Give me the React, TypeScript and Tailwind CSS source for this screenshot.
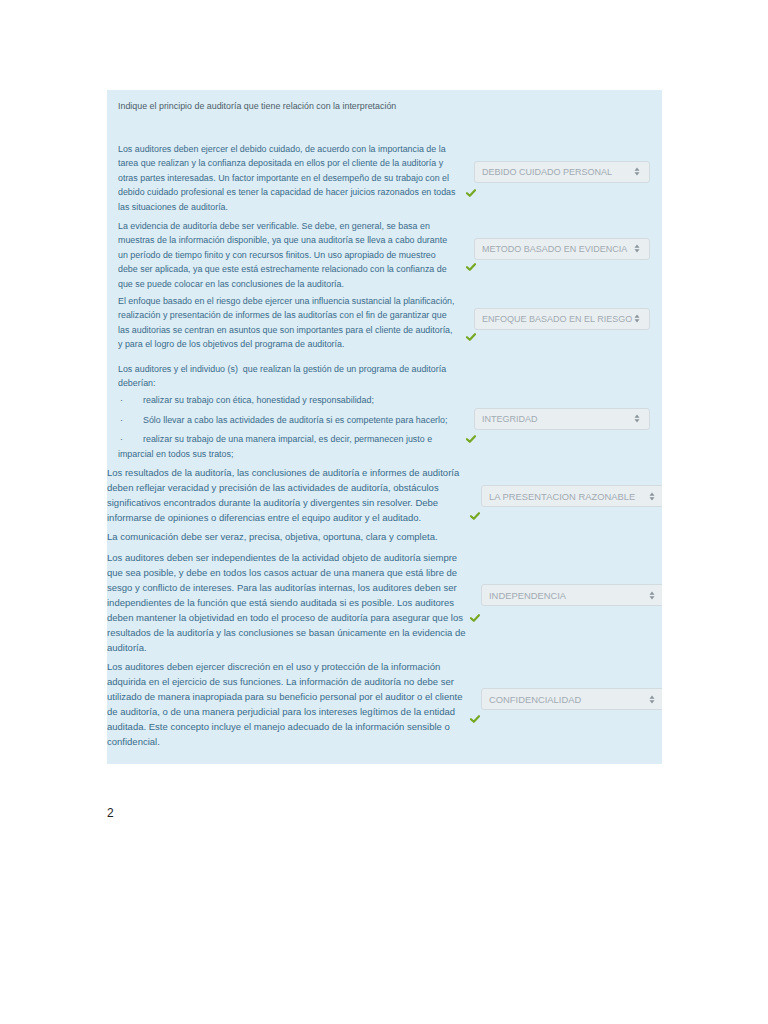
import React from 'react';

const FONT = { fontFamily: '"Liberation Sans", Arial, sans-serif' };

function Check() {
  return (
    <svg width="10" height="8" viewBox="0 0 10 8" className="block">
      <path d="M1 4.2 L3.8 6.8 L9 1.2" fill="none" stroke="#76a824" strokeWidth="2.2" strokeLinecap="round" strokeLinejoin="round" />
    </svg>
  );
}

function Arrows() {
  return (
    <svg width="6" height="9" viewBox="0 0 6 9" className="block">
      <path d="M3 0.5 L5.5 3.7 L0.5 3.7 Z" fill="#8a949b" />
      <path d="M3 8.5 L5.5 5.3 L0.5 5.3 Z" fill="#8a949b" />
    </svg>
  );
}

function Select({ label, wide }: { label: string; wide?: boolean }) {
  return (
    <div
      className={`flex items-center justify-between h-[22px] shrink-0 bg-[#e9eef1] border border-[#d3dbe0] rounded-[3px] pl-[7px] pr-[9px] ${
        wide ? 'w-[184px]' : 'w-[176px]'
      }`}
    >
      <span className={`text-[#a1abb2] uppercase whitespace-nowrap ${wide ? 'text-[9.4px]' : 'text-[9px]'}`}>
        {label}
      </span>
      <Arrows />
    </div>
  );
}

function Lines({ lines }: { lines: string[] }) {
  return (
    <>
      {lines.map((l) => (
        <span key={l} className="block whitespace-nowrap">
          {l}
        </span>
      ))}
    </>
  );
}

interface RowProps {
  children: React.ReactNode;
  label: string;
  checkTop: number;
  selectTop: number;
  className?: string;
}

// filas con margen interior (texto en x=118)
function RowA({ children, label, checkTop, selectTop, className }: RowProps) {
  return (
    <div className={`flex items-start pl-[11px] text-[8.9px] leading-[14.5px] ${className ?? ''}`}>
      <div className="w-[345px] shrink-0">{children}</div>
      <div className="ml-[3px] w-[8px] shrink-0" style={{ marginTop: checkTop }}>
        <Check />
      </div>
      <div className="shrink-0" style={{ marginTop: selectTop }}>
        <Select label={label} />
      </div>
    </div>
  );
}

// filas sin margen (texto en x=107)
function RowB({ children, label, checkTop, selectTop, className }: RowProps) {
  return (
    <div className={`flex items-start text-[9.5px] leading-[15px] ${className ?? ''}`}>
      <div className="w-[358px] shrink-0">{children}</div>
      <div className="ml-[5px] w-[10px] shrink-0" style={{ marginTop: checkTop }}>
        <Check />
      </div>
      <div className="ml-[1px] shrink-0" style={{ marginTop: selectTop }}>
        <Select label={label} wide />
      </div>
    </div>
  );
}

function Bullet({ text, className }: { text: string; className?: string }) {
  return (
    <span className={`block whitespace-nowrap ${className ?? ''}`}>
      <span className="inline-block w-[25px] pl-[2px]">·</span>
      {text}
    </span>
  );
}

export default function App() {
  return (
    <div className="min-h-screen bg-white" style={FONT}>
      <div className="pt-[90px] pl-[107px]">
        <div className="w-[555px] bg-[#dcedf6] overflow-hidden pt-[8.75px] pb-[15.5px] text-[#3a6b89]">
          <p className="pl-[11px] text-[8.9px] leading-[14.5px] text-[#4d5d68]">
            Indique el principio de auditoría que tiene relación con la interpretación
          </p>

          <RowA className="mt-[28.5px]" label="Debido cuidado personal" checkTop={47} selectTop={19}>
            <Lines
              lines={[
                'Los auditores deben ejercer el debido cuidado, de acuerdo con la importancia de la',
                'tarea que realizan y la confianza depositada en ellos por el cliente de la auditoría y',
                'otras partes interesadas. Un factor importante en el desempeño de su trabajo con el',
                'debido cuidado profesional es tener la capacidad de hacer juicios razonados en todas',
                'las situaciones de auditoría.',
              ]}
            />
          </RowA>

          <RowA className="mt-[4.5px]" label="Metodo basado en evidencia" checkTop={44.5} selectTop={19}>
            <Lines
              lines={[
                'La evidencia de auditoría debe ser verificable. Se debe, en general, se basa en',
                'muestras de la información disponible, ya que una auditoría se lleva a cabo durante',
                'un período de tiempo finito y con recursos finitos. Un uso apropiado de muestreo',
                'debe ser aplicada, ya que este está estrechamente relacionado con la confianza de',
                'que se puede colocar en las conclusiones de la auditoría.',
              ]}
            />
          </RowA>

          <RowA className="mt-[2.5px]" label="Enfoque basado en el riesgo" checkTop={39.5} selectTop={14}>
            <Lines
              lines={[
                'El enfoque basado en el riesgo debe ejercer una influencia sustancial la planificación,',
                'realización y presentación de informes de las auditorías con el fin de garantizar que',
                'las auditorias se centran en asuntos que son importantes para el cliente de auditoría,',
                'y para el logro de los objetivos del programa de auditoría.',
              ]}
            />
          </RowA>

          <RowA className="mt-[10px]" label="Integridad" checkTop={73.5} selectTop={46}>
            <span className="block whitespace-pre">
              Los auditores y el individuo (s)  que realizan la gestión de un programa de auditoría
            </span>
            <span className="block">deberían:</span>
            <Bullet className="mt-[2.5px]" text="realizar su trabajo con ética, honestidad y responsabilidad;" />
            <Bullet
              className="mt-[5.5px]"
              text="Sólo llevar a cabo las actividades de auditoría si es competente para hacerlo;"
            />
            <Bullet
              className="mt-[4.5px]"
              text="realizar su trabajo de una manera imparcial, es decir, permanecen justo e"
            />
            <span className="block">imparcial en todos sus tratos;</span>
          </RowA>

          <RowB className="mt-[3.5px]" label="La presentacion razonable" checkTop={47} selectTop={20.5}>
            <Lines
              lines={[
                'Los resultados de la auditoría, las conclusiones de auditoría e informes de auditoría',
                'deben reflejar veracidad y precisión de las actividades de auditoría, obstáculos',
                'significativos encontrados durante la auditoría y divergentes sin resolver. Debe',
                'informarse de opiniones o diferencias entre el equipo auditor y el auditado.',
              ]}
            />
          </RowB>

          <p className="mt-[4px] text-[9.5px] leading-[15px]">
            La comunicación debe ser veraz, precisa, objetiva, oportuna, clara y completa.
          </p>

          <RowB className="mt-[6px]" label="Independencia" checkTop={64} selectTop={34.5}>
            <Lines
              lines={[
                'Los auditores deben ser independientes de la actividad objeto de auditoría siempre',
                'que sea posible, y debe en todos los casos actuar de una manera que está libre de',
                'sesgo y conflicto de intereses. Para las auditorías internas, los auditores deben ser',
                'independientes de la función que está siendo auditada si es posible. Los auditores',
                'deben mantener la objetividad en todo el proceso de auditoría para asegurar que los',
                'resultados de la auditoría y las conclusiones se basan únicamente en la evidencia de',
                'auditoría.',
              ]}
            />
          </RowB>

          <RowB className="mt-[4px]" label="Confidencialidad" checkTop={56} selectTop={29.5}>
            <Lines
              lines={[
                'Los auditores deben ejercer discreción en el uso y protección de la información',
                'adquirida en el ejercicio de sus funciones. La información de auditoría no debe ser',
                'utilizado de manera inapropiada para su beneficio personal por el auditor o el cliente',
                'de auditoría, o de una manera perjudicial para los intereses legítimos de la entidad',
                'auditada. Este concepto incluye el manejo adecuado de la información sensible o',
                'confidencial.',
              ]}
            />
          </RowB>
        </div>

        <p className="mt-[42px] text-[12px] leading-[14px] text-[#222]">2</p>
      </div>
    </div>
  );
}
